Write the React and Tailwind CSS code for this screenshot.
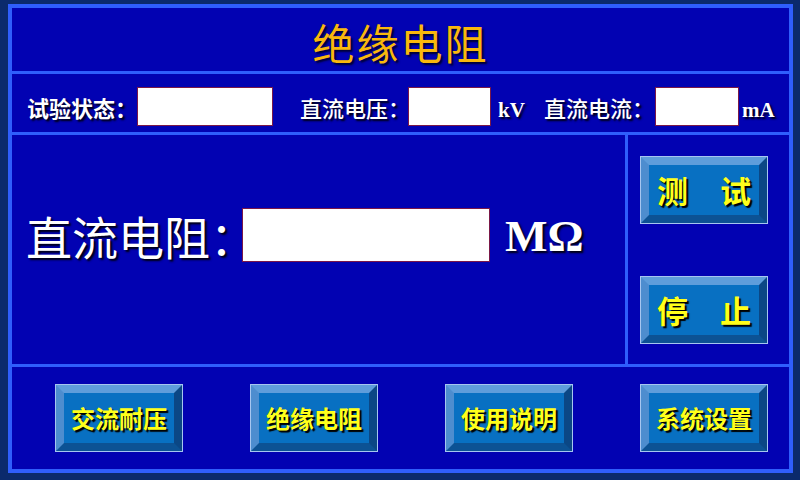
import React from 'react';

const cjk = "font-['Noto_Sans_CJK_SC','Noto_Sans',sans-serif]";
const serif = "font-['Liberation_Serif',serif]";

// white field with the thin maroon edge used for readouts
const Field = ({ className }) => (
  <div className={`bg-white border border-[#7a1848] shrink-0 ${className}`} />
);

// raised bevel button, yellow text
const BevelButton = ({ children }) => (
  <div className="w-[128px] h-[68px] border border-[#a6c6f0] shrink-0">
    <div className="w-full h-full border-[8px] border-t-[#5e9ddb] border-l-[#4d8dcf] border-r-[#0b4785] border-b-[#0c5294] bg-[#0870c2] flex items-center">
      {children}
    </div>
  </div>
);

const btnText = `${cjk} font-bold text-[#ffff1a] [text-shadow:2px_2px_1px_#000]`;
const whiteText = `text-white [text-shadow:2px_2px_2px_#000010]`;

export default function App() {
  const bottomButtons = ['交流耐压', '绝缘电阻', '使用说明', '系统设置'];

  return (
    <div className="w-[800px] h-[480px] bg-[#0b2a6c] pl-[8px] pt-[4px] pr-[7px] pb-[7px]">
      <div className="w-full h-full border-[4px] border-[#2f5efc] bg-[#0202b2] flex flex-col">
        {/* title */}
        <div className="h-[66px] border-b-[3px] border-[#2f5efc] flex items-center justify-center pt-[4px] shrink-0">
          <span className={`${cjk} text-[42px] leading-none tracking-[2px] text-[#f9b80c] [text-shadow:2px_2px_2px_#000030]`}>
            绝缘电阻
          </span>
        </div>

        {/* status row */}
        <div className="h-[61px] border-b-[3px] border-[#2f5efc] flex items-center pl-[15px] pt-[7px] shrink-0">
          <span className={`${cjk} ${whiteText} text-[22px] font-bold leading-none`}>试验状态：</span>
          <Field className="w-[136px] h-[39px]" />
          <span className={`${cjk} ${whiteText} text-[22px] font-medium leading-none ml-[27px]`}>直流电压：</span>
          <Field className="w-[83px] h-[39px] ml-[-2px]" />
          <span className={`${serif} ${whiteText} text-[21px] font-bold leading-none ml-[7px] mt-[8px]`}>kV</span>
          <span className={`${cjk} ${whiteText} text-[22px] font-medium leading-none ml-[19px]`}>直流电流：</span>
          <Field className="w-[84px] h-[39px] ml-[1px]" />
          <span className={`${serif} ${whiteText} text-[21px] font-bold leading-none ml-[3px] mt-[8px]`}>mA</span>
        </div>

        {/* main area */}
        <div className="h-[232px] border-b-[3px] border-[#2f5efc] flex shrink-0">
          <div className="w-[616px] border-r-[3px] border-[#2f5efc] flex items-center pl-[14px] pb-[30px]">
            <span className={`${cjk} ${whiteText} text-[46px] leading-none`}>直流电阻：</span>
            <Field className="w-[248px] h-[54px] ml-[-14px]" />
            <span className={`${serif} ${whiteText} text-[45px] font-bold leading-none ml-[15px] mt-[4px]`}>MΩ</span>
          </div>
          <div className="flex-1 flex flex-col justify-center gap-[52px] pl-[12px]">
            <BevelButton>
              <div className={`${btnText} w-full flex justify-between px-[8px] text-[31px] leading-none`}>
                <span>测</span>
                <span>试</span>
              </div>
            </BevelButton>
            <BevelButton>
              <div className={`${btnText} w-full flex justify-between px-[8px] text-[31px] leading-none`}>
                <span>停</span>
                <span>止</span>
              </div>
            </BevelButton>
          </div>
        </div>

        {/* bottom buttons */}
        <div className="flex-1 flex items-center pl-[43px] gap-[67px]">
          {bottomButtons.map((label) => (
            <BevelButton key={label}>
              <div className={`${btnText} w-full text-center text-[24px] leading-none`}>{label}</div>
            </BevelButton>
          ))}
        </div>
      </div>
    </div>
  );
}
